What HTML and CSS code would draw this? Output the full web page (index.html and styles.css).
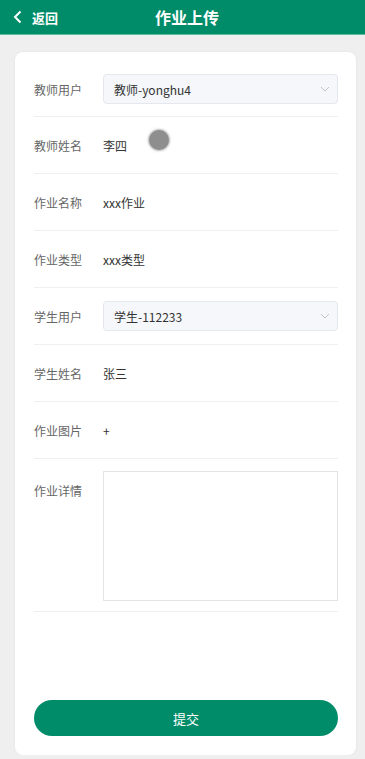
FILE: index.html
```html
<!DOCTYPE html>
<html lang="zh-CN">
    <head>
        <meta charset="UTF-8">
        <meta name="viewport" content="width=device-width, initial-scale=1.0">
        <title>作业上传</title>
        <link rel="stylesheet" href="styles.css">
    </head>
    <body>
        <div class="topo">
            <a class="voltar" href="#">
                <svg width="10" height="14" viewBox="0 0 10 14"><path d="M7.5 1.5 L2 7 L7.5 12.5" fill="none" stroke="#fff" stroke-width="2"/></svg>
                返回
            </a>
            <h1 class="titulo">作业上传</h1>
            <span></span>
        </div>

        <form class="cartao" action="">
            <div class="linha">
                <label>教师用户</label>
                <div class="seletor">
                    <span>教师-yonghu4</span>
                    <svg width="10" height="6" viewBox="0 0 10 6"><path d="M1 1 L5 5 L9 1" fill="none" stroke="#c0c4cc" stroke-width="1"/></svg>
                </div>
            </div>
            <div class="linha">
                <label>教师姓名</label>
                <span class="valor">李四</span>
                <span class="toque"></span>
            </div>
            <div class="linha">
                <label>作业名称</label>
                <span class="valor">xxx作业</span>
            </div>
            <div class="linha">
                <label>作业类型</label>
                <span class="valor">xxx类型</span>
            </div>
            <div class="linha">
                <label>学生用户</label>
                <div class="seletor">
                    <span>学生-112233</span>
                    <svg width="10" height="6" viewBox="0 0 10 6"><path d="M1 1 L5 5 L9 1" fill="none" stroke="#c0c4cc" stroke-width="1"/></svg>
                </div>
            </div>
            <div class="linha">
                <label>学生姓名</label>
                <span class="valor">张三</span>
            </div>
            <div class="linha">
                <label>作业图片</label>
                <span class="valor">+</span>
            </div>
            <div class="linha linha-texto">
                <label>作业详情</label>
                <textarea></textarea>
            </div>
            <button class="botao" type="button">提交</button>
        </form>
    </body>
</html>
```

FILE: styles.css
```css
*{
    margin: 0;
    padding: 0;
    box-sizing: border-box;
}
body{
    background-color: #efefef;
    font-family: "Noto Sans CJK SC", "Noto Sans", sans-serif;
    color: #333;
    font-size: 12px;
}
.topo{
    height: 35px;
    background-color: #008c69;
    border-bottom: 1px solid #5dbb9f;
    display: grid;
    grid-template-columns: 1fr auto 1fr;
    align-items: center;
    padding: 0 0 0 13px;
    color: white;
}
.voltar{
    display: flex;
    align-items: center;
    gap: 9px;
    color: white;
    text-decoration: none;
    font-size: 13px;
    font-weight: bold;
}
.titulo{
    font-size: 16px;
    font-weight: bold;
    padding-right: 4px;
}
.cartao{
    position: relative;
    margin: 17px 9px 0 15px;
    height: 703px;
    background-color: white;
    border-radius: 8px;
    box-shadow: 0 0 3px rgba(0,0,0,0.06);
    padding: 8px 18px 19px 19px;
    display: flex;
    flex-direction: column;
}
.linha{
    display: flex;
    align-items: center;
    min-height: 57px;
    padding: 13px 0;
    border-bottom: 1px solid #efefef;
}
.linha:first-child{
    padding: 14px 0 12px;
}
.linha label{
    width: 69px;
    flex-shrink: 0;
    color: #666;
}
.valor{
    color: #333;
}
.seletor{
    flex: 1;
    height: 30px;
    background-color: #f5f7fa;
    border: 1px solid #e4e7ed;
    border-radius: 4px;
    display: flex;
    align-items: center;
    justify-content: space-between;
    padding: 0 7px 0 10px;
    color: #333;
}
.linha-texto{
    align-items: flex-start;
    padding: 12px 0 10px;
}
.linha-texto label{
    padding-top: 11px;
}
textarea{
    flex: 1;
    height: 130px;
    border: 1px solid #e4e4e4;
    resize: none;
    outline: none;
}
.toque{
    position: absolute;
    left: 134px;
    top: 78px;
    width: 20px;
    height: 20px;
    border-radius: 50%;
    background-color: #8e8e8e;
    box-shadow: 0 0 2px 1px rgba(120,120,120,0.5);
}
.botao{
    margin-top: auto;
    height: 36px;
    border: none;
    border-radius: 18px;
    background-color: #008c69;
    color: white;
    font-family: inherit;
    font-size: 13px;
}
```
